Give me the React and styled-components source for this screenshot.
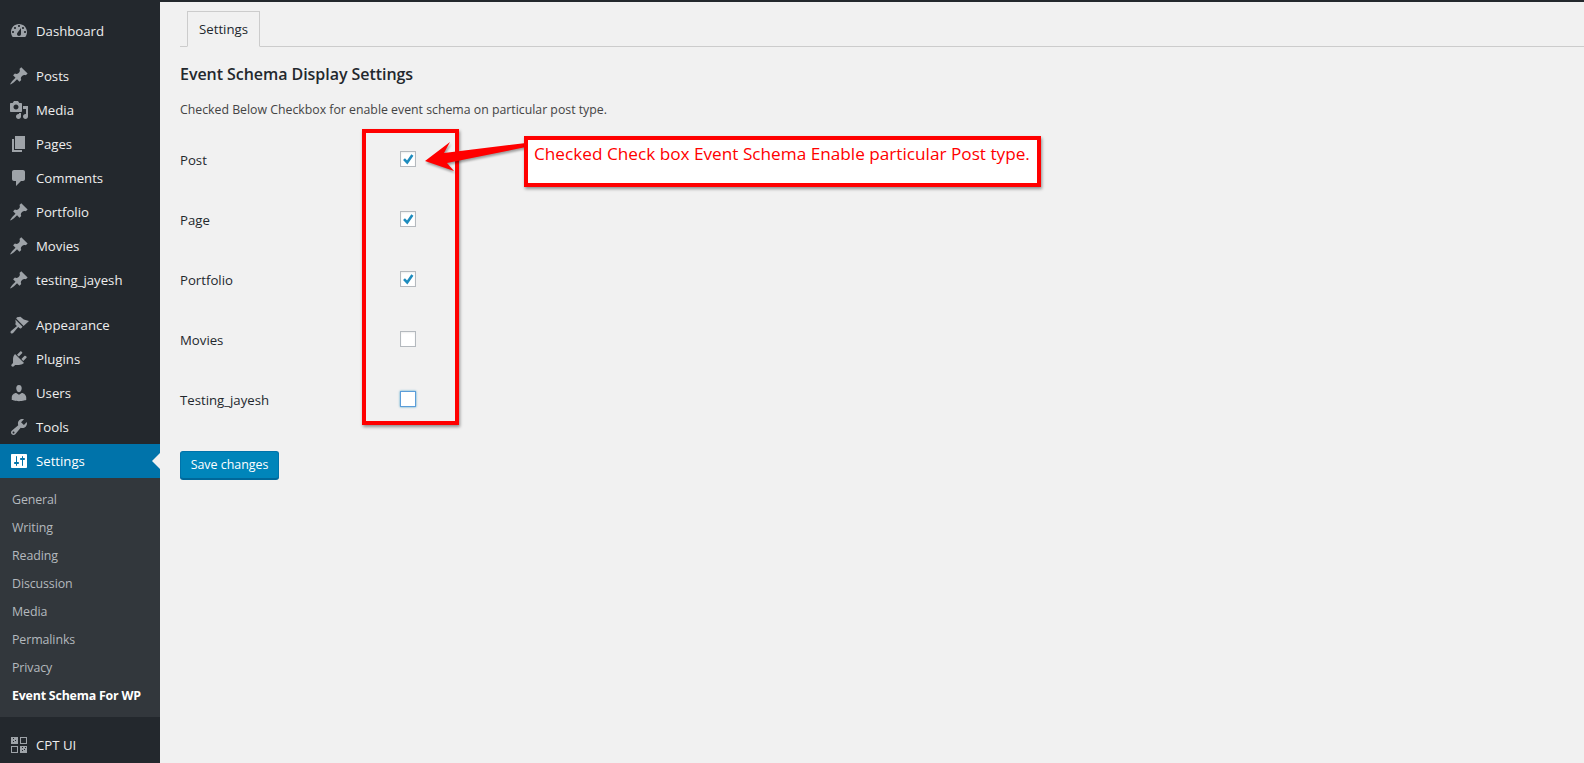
import React from 'react';
import styled, { createGlobalStyle } from 'styled-components';

const GlobalStyle = createGlobalStyle`
  html, body {
    margin: 0;
    padding: 0;
    height: 763px;
    overflow: hidden;
    background: #f1f1f1;
  }
  body {
    font-family: "Open Sans", "Noto Sans", sans-serif;
    font-size: 13px;
    color: #23282d;
  }
`;

const Page = styled.div`
  position: relative;
  display: flex;
  width: 1584px;
  height: 763px;
  overflow: hidden;
  border-top: 2px solid #23282d;
  box-sizing: border-box;
`;

const Sidebar = styled.nav`
  flex: 0 0 160px;
  background: #23282d;
  padding-top: 12px;
  box-sizing: border-box;
`;

const Separator = styled.div`
  height: 11px;
`;

const MenuRow = styled.div`
  position: relative;
  display: flex;
  align-items: center;
  height: 34px;
  padding-left: 9px;
  gap: 7px;
  color: ${p => (p.$active ? '#fff' : '#eee')};
  background: ${p => (p.$active ? '#0073aa' : 'transparent')};
  font-size: 13.2px;
`;

const MenuIcon = styled.svg`
  flex: 0 0 20px;
  width: 20px;
  height: 20px;
  fill: ${p => (p.$active ? '#fff' : '#9ea3a8')};
  fill-rule: evenodd;
`;

const ActiveNotch = styled.span`
  position: absolute;
  right: 0;
  top: 9px;
  border: 8px solid transparent;
  border-right-color: #f1f1f1;
  border-left-width: 0;
`;

const SubMenu = styled.div`
  background: #32373c;
  padding: 7px 0 8px;
`;

const SubRow = styled.div`
  display: flex;
  align-items: center;
  height: 28px;
  padding-left: 12px;
  font-size: 12.4px;
  letter-spacing: ${p => (p.$current ? '-0.2px' : '-0.1px')};
  color: ${p => (p.$current ? '#fff' : '#b4b9be')};
  font-weight: ${p => (p.$current ? 700 : 400)};
`;

const Main = styled.main`
  flex: 1;
  padding: 9px 0 0 20px;
`;

const TabBar = styled.div`
  display: flex;
  height: 36px;
  padding-left: 7px;
  border-bottom: 1px solid #ccc;
  box-sizing: border-box;
`;

const Tab = styled.div`
  display: flex;
  align-items: center;
  justify-content: center;
  width: 73px;
  height: 36px;
  box-sizing: border-box;
  border: 1px solid #ccc;
  border-bottom-color: #f1f1f1;
  font-size: 13.2px;
  color: #23282d;
  padding-bottom: 1px;
`;

const Heading = styled.h2`
  margin: 17px 0 0;
  font-size: 16px;
  line-height: 20px;
  font-weight: 600;
  letter-spacing: -0.05px;
  color: #23282d;
`;

const Description = styled.p`
  margin: 16px 0 0;
  font-size: 12.3px;
  line-height: 20px;
  color: #444;
`;

const SettingsList = styled.div`
  margin-top: 10.5px;
`;

const SettingRow = styled.label`
  display: flex;
  align-items: center;
  height: 59.9px;
`;

const SettingLabel = styled.span`
  flex: 0 0 220px;
  font-size: 13.2px;
  color: #23282d;
`;

const Checkbox = styled.span`
  display: flex;
  align-items: center;
  justify-content: center;
  width: 16px;
  height: 16px;
  box-sizing: border-box;
  background: #fff;
  border: 1px solid ${p => (p.$focused ? '#5b9dd9' : '#b4b9be')};
  box-shadow: ${p => (p.$focused ? '0 0 2px rgba(30,140,190,.8)' : 'inset 0 1px 2px rgba(0,0,0,.07)')};
  margin-top: -2px;
`;

const Tick = styled.svg`
  width: 14px;
  height: 14px;
  fill: none;
  stroke: #1e8cbe;
  stroke-width: 2.6;
`;

const SaveButton = styled.button`
  display: block;
  margin-top: 21px;
  width: 99px;
  height: 28px;
  padding: 0;
  font-family: inherit;
  font-size: 12.4px;
  color: #fff;
  background: #0085ba;
  border: 1px solid #0073aa;
  border-bottom-color: #006799;
  border-radius: 3px;
  box-shadow: 0 1px 0 #006799;
`;

const Frame = styled.div`
  position: absolute;
  left: 362px;
  top: 127px;
  width: 97px;
  height: 296px;
  box-sizing: border-box;
  border: 4px solid #f00;
  box-shadow: 1px 2px 3px rgba(0, 0, 0, 0.4);
`;

const Callout = styled.div`
  position: absolute;
  left: 524px;
  top: 134px;
  width: 517px;
  height: 51px;
  box-sizing: border-box;
  padding: 1px 0 0 6px;
  background: #fff;
  border: 4px solid #f00;
  box-shadow: 1px 2px 3px rgba(0, 0, 0, 0.4);
  color: #f00;
  font-size: 17.2px;
  line-height: 26px;
  white-space: nowrap;
`;

const Arrow = styled.svg`
  position: absolute;
  left: 420px;
  top: 130px;
  width: 110px;
  height: 50px;
  fill: #f00;
  filter: drop-shadow(1px 2px 1px rgba(0, 0, 0, 0.35));
`;

const icons = {
  dashboard: 'M3.76 16h12.48c1.1-1.37 1.76-3.11 1.76-5 0-4.42-3.58-8-8-8s-8 3.58-8 8c0 1.89.66 3.63 1.76 5zM10 4c.55 0 1 .45 1 1s-.45 1-1 1-1-.45-1-1 .45-1 1-1zM6 6c.55 0 1 .45 1 1s-.45 1-1 1-1-.45-1-1 .45-1 1-1zm8 0c.55 0 1 .45 1 1s-.45 1-1 1-1-.45-1-1 .45-1 1-1zm-5.37 5.55L12 7v6c0 1.1-.9 2-2 2s-2-.9-2-2c0-.57.24-1.08.63-1.45zM4 10c.55 0 1 .45 1 1s-.45 1-1 1-1-.45-1-1 .45-1 1-1zm12 0c.55 0 1 .45 1 1s-.45 1-1 1-1-.45-1-1 .45-1 1-1z',
  pin: 'M10.44 3.02l1.82-1.82 6.36 6.35-1.83 1.82c-1.05-.68-2.48-.57-3.41.36l-.75.75c-.92.93-1.04 2.35-.35 3.41l-1.83 1.82-2.41-2.41-2.8 2.79c-.42.42-3.38 2.71-3.8 2.29s1.86-3.39 2.28-3.81l2.79-2.79L4.1 9.36l1.83-1.82c1.05.69 2.48.57 3.4-.36l.75-.75c.93-.92 1.05-2.35.36-3.41z',
  media: 'M13 11V4c0-.55-.45-1-1-1h-1.67L9 1H5L3.67 3H2c-.55 0-1 .45-1 1v7c0 .55.45 1 1 1h10c.55 0 1-.45 1-1zM7 4.5c1.38 0 2.5 1.12 2.5 2.5S8.38 9.5 7 9.5 4.5 8.38 4.5 7 5.62 4.5 7 4.5zM14 6h5v10.5c0 1.38-1.12 2.5-2.5 2.5S14 17.88 14 16.5s1.12-2.5 2.5-2.5c.17 0 .34.02.5.05V9h-3V6zm-4 8.05V13h2v3.5c0 1.38-1.12 2.5-2.5 2.5S7 17.88 7 16.5 8.12 14 9.5 14c.17 0 .34.02.5.05z',
  page: 'M6 15V2h10v13H6zm-1 1h8v2H3V5h2v11z',
  comments: 'M5 2h9c1.1 0 2 .9 2 2v7c0 1.1-.9 2-2 2h-2l-5 5v-5H5c-1.1 0-2-.9-2-2V4c0-1.1.9-2 2-2z',
  appearance: 'M8 2.2l3.4-.4 3.4 2.8L20 6l-5.4 5L7.2 3.6zM6.4 4.6l7.2 7.2-1.4 1.4c-.6.5-1.3.4-1.8-.1l-1.2-1.2-4.6 5.6c-.8 1-1.8 1.3-2.6.7-.8-.7-.6-1.8.3-2.5l5.7-4.6-1.2-1.2c-.5-.5-.6-1.2-.1-1.8z',
  plugins: 'M13.11 4.36L9.87 7.6 8 5.73l3.24-3.24c.35-.34 1.05-.2 1.56.32.52.51.66 1.21.31 1.55zm-8 1.77l.91-1.12 9.01 9.01-1.19.84c-.71.71-2.63 1.16-3.82 1.16H6.14L4.9 17.26c-.59.59-1.54.59-2.12 0-.59-.58-.59-1.53 0-2.12l1.24-1.24v-3.88c0-1.13.4-3.19 1.09-3.89zm7.26 3.97l3.24-3.24c.34-.35 1.04-.21 1.55.31.52.51.66 1.21.31 1.55l-3.24 3.25z',
  users: 'M10 9.25c-2.27 0-2.73-3.44-2.73-3.44C7 4.02 7.82 2 9.97 2c2.16 0 2.98 2.02 2.71 3.81 0 0-.41 3.44-2.68 3.44zm0 2.57L12.72 10c2.39 0 4.52 2.33 4.52 4.53v2.49s-3.65 1.13-7.24 1.13c-3.65 0-7.24-1.13-7.24-1.13v-2.49c0-2.25 1.94-4.48 4.47-4.48z',
  tools: 'M16.68 9.77c-1.34 1.34-3.3 1.67-4.95.99l-5.41 6.52c-.99.99-2.59.99-3.58 0s-.99-2.59 0-3.57l6.52-5.42c-.68-1.65-.35-3.61.99-4.95 1.28-1.28 3.12-1.62 4.72-1.06l-2.89 2.89 2.82 2.82 2.86-2.87c.53 1.58.18 3.39-1.08 4.65zM3.81 16.21c.4.39 1.04.39 1.43 0 .4-.4.4-1.04 0-1.43-.39-.4-1.03-.4-1.43 0-.39.39-.39 1.03 0 1.43z',
  settings: 'M18 16V4c0-.55-.45-1-1-1H3c-.55 0-1 .45-1 1v12c0 .55.45 1 1 1h14c.55 0 1-.45 1-1zM8 11h1c.55 0 1 .45 1 1s-.45 1-1 1H8v1.5c0 .28-.22.5-.5.5s-.5-.22-.5-.5V13H6c-.55 0-1-.45-1-1s.45-1 1-1h1V5.5c0-.28.22-.5.5-.5s.5.22.5.5V11zm5-2h-1c-.55 0-1-.45-1-1s.45-1 1-1h1V5.5c0-.28.22-.5.5-.5s.5.22.5.5V7h1c.55 0 1 .45 1 1s-.45 1-1 1h-1v5.5c0 .28-.22.5-.5.5s-.5-.22-.5-.5V9z',
  forms: 'M2 2h7v7H2V2zm2 1v1h1V3H4zm2 2v1h1V5H6zM4 6v1h1V6H4zm7-4h7v7h-7V2zm1 1v5h5V3h-5zM2 11h7v7H2v-7zm1 1v5h5v-5H3zm8-1h7v7h-7v-7zm2 1v1h1v-1h-1zm2 2v1h1v-1h-1zm-2 1v1h1v-1h-1zm3-3v1h1v-1h-1z',
};

const Icon = ({ name, active }) => (
  <MenuIcon viewBox="0 0 20 20" $active={active}>
    <path d={icons[name]} />
  </MenuIcon>
);

const Item = ({ icon, label, active }) => (
  <MenuRow $active={active}>
    <Icon name={icon} active={active} />
    {label}
    {active && <ActiveNotch />}
  </MenuRow>
);

const subItems = ['General', 'Writing', 'Reading', 'Discussion', 'Media', 'Permalinks', 'Privacy'];

const settings = [
  { label: 'Post', checked: true },
  { label: 'Page', checked: true },
  { label: 'Portfolio', checked: true },
  { label: 'Movies' },
  { label: 'Testing_jayesh', focused: true },
];

const App = () => (
  <>
    <GlobalStyle />
    <Page>
      <Sidebar>
        <Item icon="dashboard" label="Dashboard" />
        <Separator />
        <Item icon="pin" label="Posts" />
        <Item icon="media" label="Media" />
        <Item icon="page" label="Pages" />
        <Item icon="comments" label="Comments" />
        <Item icon="pin" label="Portfolio" />
        <Item icon="pin" label="Movies" />
        <Item icon="pin" label="testing_jayesh" />
        <Separator />
        <Item icon="appearance" label="Appearance" />
        <Item icon="plugins" label="Plugins" />
        <Item icon="users" label="Users" />
        <Item icon="tools" label="Tools" />
        <Item icon="settings" label="Settings" active />
        <SubMenu>
          {subItems.map(s => <SubRow key={s}>{s}</SubRow>)}
          <SubRow $current>Event Schema For WP</SubRow>
        </SubMenu>
        <Separator />
        <Item icon="forms" label="CPT UI" />
      </Sidebar>
      <Main>
        <TabBar>
          <Tab>Settings</Tab>
        </TabBar>
        <Heading>Event Schema Display Settings</Heading>
        <Description>Checked Below Checkbox for enable event schema on particular post type.</Description>
        <SettingsList>
          {settings.map(s => (
            <SettingRow key={s.label}>
              <SettingLabel>{s.label}</SettingLabel>
              <Checkbox $focused={s.focused}>
                {s.checked && (
                  <Tick viewBox="0 0 14 14">
                    <path d="M3 7.2l3.2 3.3L11.4 3" />
                  </Tick>
                )}
              </Checkbox>
            </SettingRow>
          ))}
        </SettingsList>
        <SaveButton>Save changes</SaveButton>
      </Main>
      <Frame />
      <Arrow viewBox="0 0 110 50">
        <polygon points="5,29 30,10 24,21 106,11 106,15 27,31 34,39" />
      </Arrow>
      <Callout>Checked Check box Event Schema Enable particular Post type.</Callout>
    </Page>
  </>
);

export default App;
